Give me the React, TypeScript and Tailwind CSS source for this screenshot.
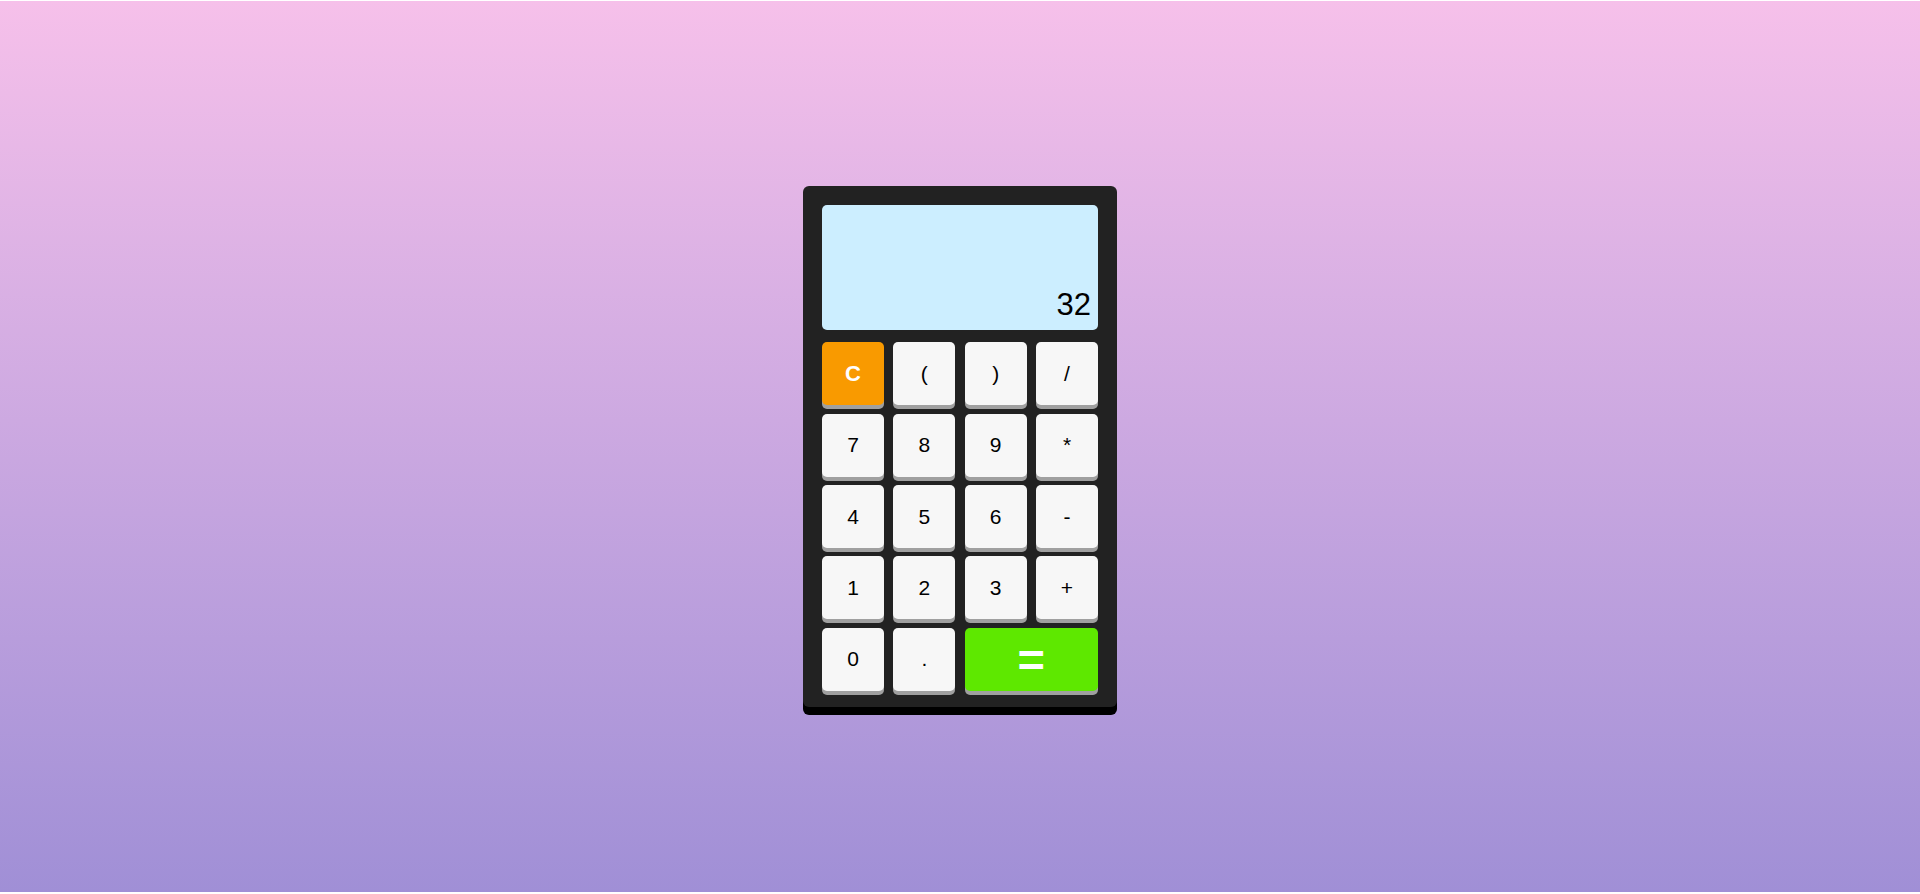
import React from "react";

type Key = { label: string; kind?: "clear" | "equals"; span?: boolean };

const keys: Key[] = [
  { label: "C", kind: "clear" },
  { label: "(" },
  { label: ")" },
  { label: "/" },
  { label: "7" },
  { label: "8" },
  { label: "9" },
  { label: "*" },
  { label: "4" },
  { label: "5" },
  { label: "6" },
  { label: "-" },
  { label: "1" },
  { label: "2" },
  { label: "3" },
  { label: "+" },
  { label: "0" },
  { label: "." },
  { label: "=", kind: "equals", span: true },
];

function KeyButton({ k }: { k: Key }) {
  if (k.kind === "clear") {
    return (
      <button className="h-[63px] rounded-[5px] bg-[#f99a00] shadow-[0_4px_0_#a0a0a0] flex items-center justify-center text-white font-bold text-[22px]">
        {k.label}
      </button>
    );
  }
  if (k.kind === "equals") {
    return (
      <button className="col-span-2 h-[63px] rounded-[5px] bg-[#5ee800] shadow-[0_4px_0_#a0a0a0] flex items-center justify-center text-white font-bold text-[47px] leading-none">
        {k.label}
      </button>
    );
  }
  return (
    <button className="h-[63px] rounded-[5px] bg-[#f7f7f7] shadow-[0_4px_0_#a0a0a0] flex items-center justify-center text-black text-[21px]">
      {k.label}
    </button>
  );
}

export default function App() {
  return (
    <div
      className="h-screen w-full bg-white pt-[1px]"
      style={{ fontFamily: '"Liberation Sans", Arial, sans-serif' }}
    >
      <div className="h-[891px] w-full bg-gradient-to-b from-[#f6c0ea] to-[#a08fd6] flex items-center justify-center">
        <div className="w-[314px] px-[19px] pt-[19px] pb-[16px] rounded-[6px] bg-[#222222] shadow-[0_8px_0_#000000]">
          <div className="h-[125px] rounded-[5px] bg-[#cceeff] flex items-end justify-end pr-[7px] pb-[10px] text-[31px] leading-none text-black">
            32
          </div>
          <div className="mt-[12px] grid grid-cols-4 gap-x-[9.33px] gap-y-[8.33px]">
            {keys.map((k, i) => (
              <KeyButton key={i} k={k} />
            ))}
          </div>
        </div>
      </div>
    </div>
  );
}
